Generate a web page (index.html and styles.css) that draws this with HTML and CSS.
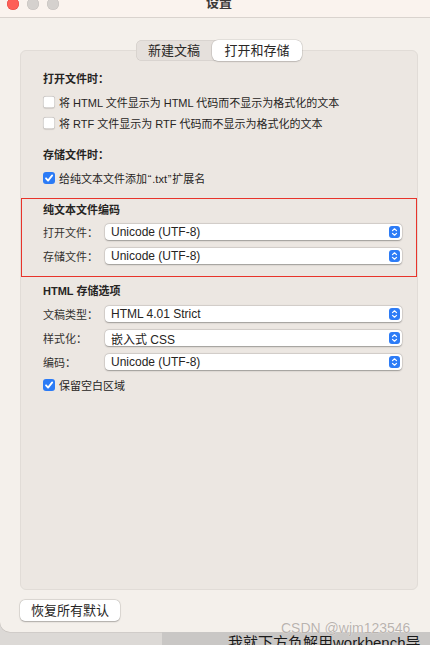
FILE: index.html
```html
<!DOCTYPE html>
<html lang="zh">
<head>
<meta charset="utf-8">
<title>设置</title>
<link rel="stylesheet" href="styles.css">
</head>
<body>
<div class="window">
  <div class="titlebar">
    <div class="lights"><span class="light red"></span><span class="light grey"></span><span class="light grey"></span></div>
    <div class="title">设置</div>
    <div></div>
  </div>
  <div class="content">
    <div class="tabs">
      <div class="tab">新建文稿</div>
      <div class="tab active">打开和存储</div>
    </div>
    <div class="panel">
      <div class="group">
        <div class="heading">打开文件时：</div>
        <div class="check"><span class="box"></span><span>将 HTML 文件显示为 HTML 代码而不显示为格式化的文本</span></div>
        <div class="check"><span class="box"></span><span>将 RTF 文件显示为 RTF 代码而不显示为格式化的文本</span></div>
      </div>
      <div class="group g2">
        <div class="heading">存储文件时：</div>
        <div class="check"><span class="box on"><svg viewBox="0 0 12 12" width="12" height="12"><path d="M3 6.3 L5.1 8.6 L9.2 3.4" fill="none" stroke="#fff" stroke-width="1.8" stroke-linecap="round" stroke-linejoin="round"/></svg></span><span>给纯文本文件添加<span class="q">“</span>.txt<span class="q">”</span>扩展名</span></div>
      </div>
      <div class="group highlight">
        <div class="heading">纯文本文件编码</div>
        <div class="field"><span class="label">打开文件：</span><div class="select"><span>Unicode (UTF-8)</span><span class="stepper"><svg viewBox="0 0 11 12" width="11" height="12"><path d="M3.5 4.6 L5.5 2.8 L7.5 4.6 M3.5 7.4 L5.5 9.2 L7.5 7.4" fill="none" stroke="#fff" stroke-width="1.2" stroke-linecap="round" stroke-linejoin="round"/></svg></span></div></div>
        <div class="field"><span class="label">存储文件：</span><div class="select"><span>Unicode (UTF-8)</span><span class="stepper"><svg viewBox="0 0 11 12" width="11" height="12"><path d="M3.5 4.6 L5.5 2.8 L7.5 4.6 M3.5 7.4 L5.5 9.2 L7.5 7.4" fill="none" stroke="#fff" stroke-width="1.2" stroke-linecap="round" stroke-linejoin="round"/></svg></span></div></div>
      </div>
      <div class="group g4">
        <div class="heading">HTML 存储选项</div>
        <div class="field"><span class="label">文稿类型：</span><div class="select"><span>HTML 4.01 Strict</span><span class="stepper"><svg viewBox="0 0 11 12" width="11" height="12"><path d="M3.5 4.6 L5.5 2.8 L7.5 4.6 M3.5 7.4 L5.5 9.2 L7.5 7.4" fill="none" stroke="#fff" stroke-width="1.2" stroke-linecap="round" stroke-linejoin="round"/></svg></span></div></div>
        <div class="field"><span class="label">样式化：</span><div class="select"><span>嵌入式 CSS</span><span class="stepper"><svg viewBox="0 0 11 12" width="11" height="12"><path d="M3.5 4.6 L5.5 2.8 L7.5 4.6 M3.5 7.4 L5.5 9.2 L7.5 7.4" fill="none" stroke="#fff" stroke-width="1.2" stroke-linecap="round" stroke-linejoin="round"/></svg></span></div></div>
        <div class="field"><span class="label">编码：</span><div class="select"><span>Unicode (UTF-8)</span><span class="stepper"><svg viewBox="0 0 11 12" width="11" height="12"><path d="M3.5 4.6 L5.5 2.8 L7.5 4.6 M3.5 7.4 L5.5 9.2 L7.5 7.4" fill="none" stroke="#fff" stroke-width="1.2" stroke-linecap="round" stroke-linejoin="round"/></svg></span></div></div>
        <div class="check"><span class="box on"><svg viewBox="0 0 12 12" width="12" height="12"><path d="M3 6.3 L5.1 8.6 L9.2 3.4" fill="none" stroke="#fff" stroke-width="1.8" stroke-linecap="round" stroke-linejoin="round"/></svg></span><span>保留空白区域</span></div>
      </div>
    </div>
    <div class="button">恢复所有默认</div>
  </div>
</div>
<div class="strip">
  <div class="strip-left"></div>
  <div class="strip-right">我就下方负解用workbench导</div>
</div>
<div class="watermark">CSDN @wjm123546</div>
</body>
</html>
```

FILE: styles.css
```css
* { box-sizing: border-box; }
html, body { margin: 0; padding: 0; }
body {
  width: 430px;
  height: 645px;
  overflow: hidden;
  position: relative;
  background: #dcd9d6;
  font-family: "Liberation Sans", "Noto Sans CJK SC", sans-serif;
  font-size: 11px;
  color: #262422;
}
.window {
  height: 632px;
  background: #f4f0eb;
  border-bottom-left-radius: 10px;
  display: flex;
  flex-direction: column;
  box-shadow: 0 0 0 0.5px #c4bfbb;
  overflow: hidden;
}
.titlebar {
  height: 18px;
  flex: none;
  background: #faf3ee;
  border-bottom: 1px solid #d9d3ce;
  display: grid;
  grid-template-columns: 1fr auto 1fr;
  align-items: start;
}
.lights { display: flex; gap: 8px; padding-left: 7px; margin-top: -2px; }
.light { width: 12px; height: 12px; border-radius: 50%; }
.red { background: #fe5f57; box-shadow: inset 0 0 0 0.5px #e1443e; }
.grey { background: #d5d1ce; box-shadow: inset 0 0 0 0.5px #c3bfbc; }
.title {
  margin-top: -4px;
  padding-left: 8px;
  font-size: 13px;
  line-height: 13px;
  font-weight: 700;
  color: #3a3836;
}
.content {
  flex: 1;
  display: flex;
  flex-direction: column;
  padding: 0 12px 0 20px;
}
.tabs {
  align-self: center;
  margin-top: 22px;
  margin-bottom: -11px;
  position: relative;
  z-index: 1;
  display: flex;
  height: 21px;
  background: #e5e0dc;
  border-radius: 6px;
  box-shadow: inset 0 0 0 0.5px #cdc8c3;
  font-size: 13px;
  color: #2a2826;
}
.tab { padding: 0 12px; line-height: 21px; }
.tab.active {
  background: #fff;
  border-radius: 6px;
  padding: 0 12.5px;
  box-shadow: 0 0 0 0.5px rgba(0,0,0,0.14), 0 1px 1.5px rgba(0,0,0,0.14);
}
.panel {
  height: 540px;
  flex: none;
  background: #ece7e2;
  border: 1px solid #e1dcd7;
  border-radius: 6px;
  padding-top: 20px;
  display: flex;
  flex-direction: column;
}
.group { padding: 0 15px 0 22px; display: flex; flex-direction: column; }
.heading { font-weight: 700; line-height: 16px; margin-bottom: 4px; }
.g2 { margin-top: 14px; }
.highlight {
  margin-top: 10px;
  border: 1px solid #e8342b;
  padding: 3px 14px 8px 21px;
}
.highlight .heading { margin-bottom: 2px; }
.g4 { margin-top: 6px; }
.g4 .heading { margin-bottom: 3px; }
.check { height: 21px; display: flex; align-items: center; gap: 4px; }
.q { padding: 0 0.8px; }
.box {
  width: 12px;
  height: 12px;
  flex: none;
  background: #fff;
  border-radius: 3px;
  box-shadow: inset 0 0 0 0.5px #b5b0ac, 0 0.5px 1px rgba(0,0,0,0.12);
  display: flex;
}
.box.on { background: #2b7bf6; box-shadow: none; }
.field { height: 24px; display: flex; align-items: center; }
.label { width: 62px; flex: none; color: #33312f; }
.select {
  flex: 1;
  height: 16px;
  background: #fff;
  border-radius: 4px;
  box-shadow: 0 0 0 0.5px rgba(0,0,0,0.1), 0 0.5px 1.5px rgba(0,0,0,0.3);
  display: flex;
  align-items: center;
  justify-content: space-between;
  padding: 0 2px 0 6px;
  font-size: 12px;
  color: #262422;
}
.stepper {
  width: 11px;
  height: 12px;
  background: #2d7cf6;
  border-radius: 3px;
  display: flex;
}
.button {
  align-self: flex-start;
  margin-top: 10px;
  width: 100px;
  height: 21px;
  background: #fff;
  border-radius: 5px;
  box-shadow: 0 0 0 0.5px rgba(0,0,0,0.12), 0 0.5px 1.5px rgba(0,0,0,0.25);
  font-size: 13px;
  line-height: 21px;
  text-align: center;
  color: #262422;
}
.strip { height: 13px; display: flex; }
.strip-left { width: 162px; }
.strip-right {
  flex: 1;
  background: #c9c7c5;
  padding-left: 66px;
  padding-top: 3px;
  font-size: 15px;
  line-height: 16px;
  white-space: nowrap;
  overflow: hidden;
  color: #1a1a1a;
}
.watermark {
  position: absolute;
  left: 281px;
  top: 620px;
  font-size: 14px;
  line-height: 16px;
  color: #b9b3ae;
  text-shadow: 0 0 1px #fff;
  white-space: nowrap;
}
```
